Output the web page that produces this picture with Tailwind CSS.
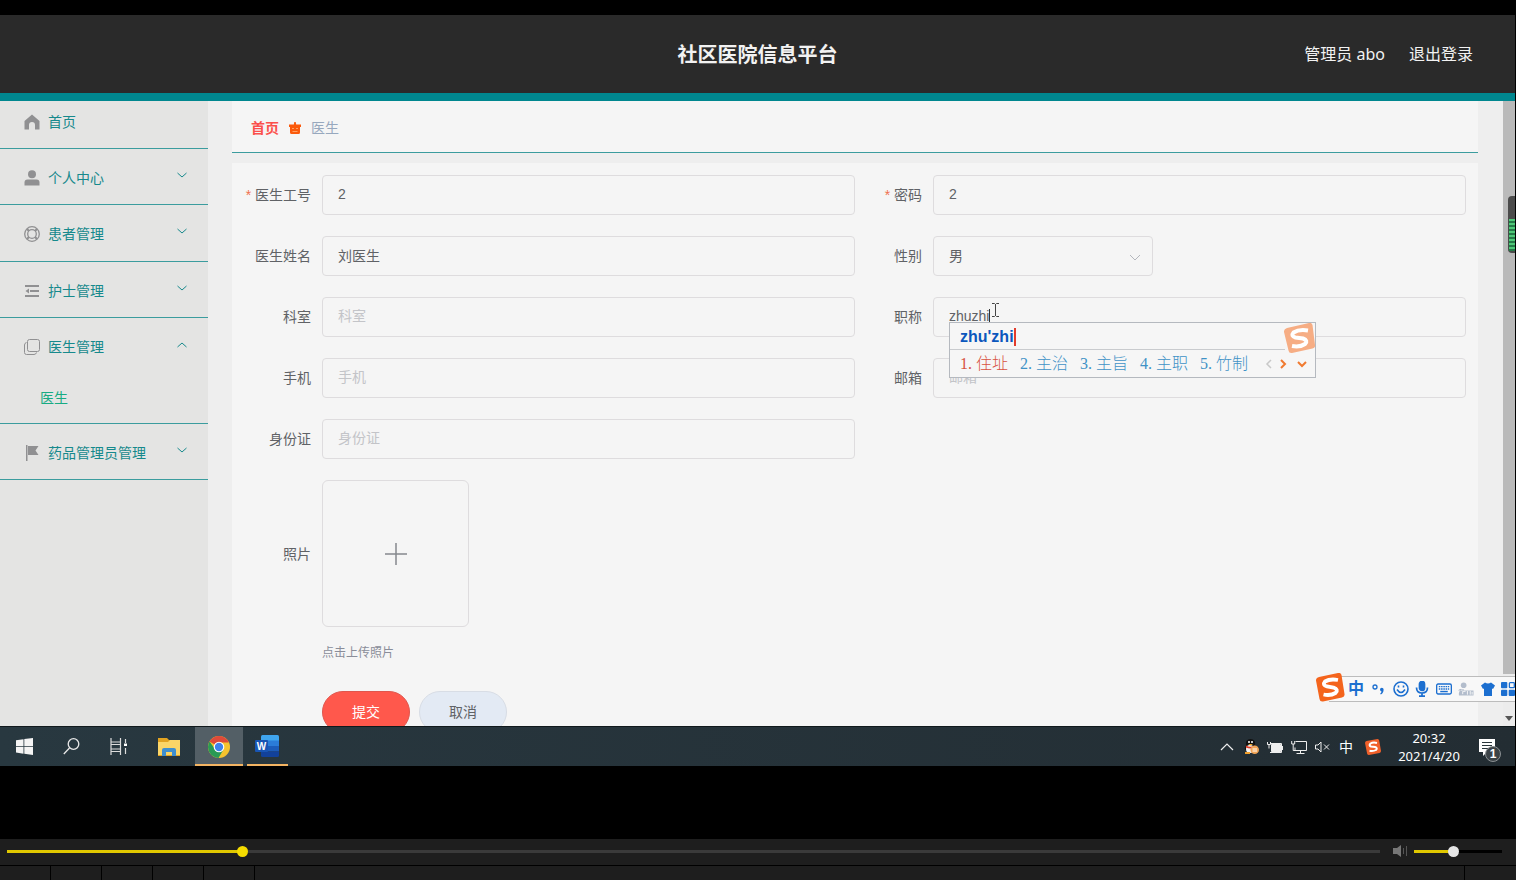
<!DOCTYPE html>
<html lang="zh-CN">
<head>
  <meta charset="UTF-8">
  <meta name="viewport" content="width=device-width, initial-scale=1.0">
  <title>社区医院信息平台</title>
  <script src="https://cdn.jsdelivr.net/npm/@tailwindcss/browser@4"></script>
</head>
<body class="bg-black h-screen flex flex-col overflow-hidden text-sm font-['Liberation_Sans','Noto_Sans_CJK_SC',sans-serif]">

  <!-- Recorded desktop -->
  <div class="flex-1 min-h-0 flex flex-col mt-[15px] mr-px">

    <!-- Header -->
    <header class="h-[86px] shrink-0 grid grid-cols-[1fr_auto_1fr] items-center bg-[#2a2a2a] border-b-8 border-[#00878f] px-[42px] text-[#f2f2f2]">
      <h1 class="col-start-2 pt-px text-xl font-bold">社区医院信息平台</h1>
      <nav class="flex justify-end gap-6 text-base font-['Noto_Sans','Noto_Sans_CJK_SC',sans-serif]">
        <span>管理员 abo</span>
        <a href="#">退出登录</a>
      </nav>
    </header>

    <div class="flex-1 min-h-0 flex bg-[#eeeeee] overflow-hidden relative">

      <!-- Sidebar -->
      <aside class="w-52 shrink-0 bg-[#e4e4e3] text-[#16898c]">
        <ul class="-mt-2">
          <li class="border-b border-[#3b9c9e]">
            <a href="#" class="h-[55px] pt-0.5 flex items-center gap-2 pl-6">
              <svg class="size-4 text-[#909092]" viewBox="0 0 16 16" fill="currentColor"><path d="M8 .5.500 7v8.500H5V11a3 3 0 0 1 6 0v4.500h4.500V7z"/></svg>
              <span>首页</span>
            </a>
          </li>
          <li class="border-b border-[#3b9c9e]">
            <a href="#" class="h-[55px] pt-0.5 flex items-center gap-2 pl-6 pr-5">
              <svg class="size-4 text-[#909092]" viewBox="0 0 16 16" fill="currentColor"><circle cx="8" cy="4.200" r="4"/><path d="M.5 15.500v-3Q.5 9.500 3.500 9.500h9q3 0 3 3v3z"/></svg>
              <span class="flex-1">个人中心</span>
              <svg class="size-3 mb-1.5" viewBox="0 0 12 12" fill="none" stroke="currentColor"><path d="m1.500 4 4.500 4 4.500-4"/></svg>
            </a>
          </li>
          <li class="border-b border-[#3b9c9e]">
            <a href="#" class="h-14 pt-0.5 flex items-center gap-2 pl-6 pr-5">
              <svg class="size-4 text-[#909092]" viewBox="0 0 16 16" fill="none" stroke="currentColor"><circle cx="8" cy="8" r="7.300" stroke-width="1.300"/><circle cx="8" cy="8" r="4.300" stroke-width="1.300"/><path d="m3 3 2 2m6 6 2 2m0-10-2 2m-6 6-2 2" stroke-width="2"/></svg>
              <span class="flex-1">患者管理</span>
              <svg class="size-3 mb-1.5" viewBox="0 0 12 12" fill="none" stroke="currentColor"><path d="m1.500 4 4.500 4 4.500-4"/></svg>
            </a>
          </li>
          <li class="border-b border-[#3b9c9e]">
            <a href="#" class="h-[55px] pt-0.5 flex items-center gap-2 pl-6 pr-5">
              <svg class="size-4 text-[#909092]" viewBox="0 0 16 16" fill="none" stroke="currentColor" stroke-width="2"><path d="M1 3h14M6 8h9M1 13h14"/><path d="M5 5.500v5L1.500 8z" fill="currentColor" stroke="none"/></svg>
              <span class="flex-1">护士管理</span>
              <svg class="size-3 mb-1.5" viewBox="0 0 12 12" fill="none" stroke="currentColor"><path d="m1.500 4 4.500 4 4.500-4"/></svg>
            </a>
          </li>
          <li class="border-b border-[#3b9c9e]">
            <a href="#" class="h-[55px] pt-0.5 flex items-center gap-2 pl-6 pr-5">
              <svg class="size-4 text-[#909092]" viewBox="0 0 16 16" fill="none" stroke="currentColor"><rect x="3.500" y=".5" width="12" height="12" rx="2"/><path d="M2.500 3.500Q.5 4 .5 6v7.500q0 2 2 2H10q2 0 2.500-2"/></svg>
              <span class="flex-1">医生管理</span>
              <svg class="size-3 mb-1" viewBox="0 0 12 12" fill="none" stroke="currentColor"><path d="m1.500 8 4.500-4 4.500 4"/></svg>
            </a>
            <a href="#" class="h-[50px] flex items-center pl-10 text-[#17ab83]">医生</a>
          </li>
          <li class="border-b border-[#3b9c9e]">
            <a href="#" class="h-[55px] pt-0.5 flex items-center gap-2 pl-6 pr-5">
              <svg class="size-4 text-[#909092]" viewBox="0 0 16 16" fill="currentColor"><path d="M2 0h1.500v16H2zM4 1h10.500l-3 4.500 3 4.500H4z"/></svg>
              <span class="flex-1">药品管理员管理</span>
              <svg class="size-3 mb-1.5" viewBox="0 0 12 12" fill="none" stroke="currentColor"><path d="m1.500 4 4.500 4 4.500-4"/></svg>
            </a>
          </li>
        </ul>
      </aside>

      <!-- Content -->
      <main class="flex-1 min-w-0 flex flex-col pl-6 pr-[25px]">
        <nav class="h-[52px] shrink-0 flex items-center gap-[10px] pl-[19px] pt-0.5 bg-[#f5f5f5] border-b border-[#3b9c9e]">
          <a href="#" class="font-bold text-[#fb504c]">首页</a>
          <svg class="size-3" viewBox="0 0 12 12" fill="#fb5a0c"><path d="M5.300 0h1.400l.5 2.500H12V5h-1v5.500Q11 12 9.500 12h-7Q1 12 1 10.500V5H0V2.500h4.800z"/><path d="M3 6.500h2m2 0h2M3.500 9.500h5" stroke="#ffb27a" stroke-width=".8"/></svg>
          <span class="text-[#97a8be]">医生</span>
        </nav>

        <form class="flex-1 min-h-0 mt-[10px] p-3 bg-[#f5f5f5] text-[#606266]">
          <div class="grid grid-cols-2 gap-y-[21px]">
            <div class="flex items-center">
              <label for="account" class="w-[78px] pr-[11px] text-right"><span class="text-[#f0714f]">*</span> 医生工号</label>
              <input id="account" type="text" value="2" class="flex-1 min-w-0 h-10 px-[15px] pb-[2px] border border-[#dedcde] rounded">
            </div>
            <div class="flex items-center">
              <label for="password" class="w-[78px] pr-[11px] text-right"><span class="text-[#f0714f]">*</span> 密码</label>
              <input id="password" type="text" value="2" class="flex-1 min-w-0 h-10 px-[15px] pb-[2px] border border-[#dedcde] rounded">
            </div>
            <div class="flex items-center">
              <label for="name" class="w-[78px] pr-[11px] text-right">医生姓名</label>
              <input id="name" type="text" value="刘医生" class="flex-1 min-w-0 h-10 px-[15px] pb-[2px] border border-[#dedcde] rounded">
            </div>
            <div class="flex items-center">
              <label for="gender" class="w-[78px] pr-[11px] text-right">性别</label>
              <div class="relative w-[220px]">
                <select id="gender" class="w-full h-10 px-[15px] border border-[#dedcde] rounded appearance-none">
                  <option>男</option>
                  <option>女</option>
                </select>
                <svg class="absolute right-[11px] top-[14px] size-[14px] pointer-events-none" viewBox="0 0 14 14" fill="none" stroke="#b4b7bd"><path d="m2 5 5 5 5-5"/></svg>
              </div>
            </div>
            <div class="flex items-center">
              <label for="dept" class="w-[78px] pr-[11px] text-right">科室</label>
              <input id="dept" type="text" placeholder="科室" class="flex-1 min-w-0 h-10 px-[15px] pb-[2px] border border-[#dedcde] rounded placeholder:text-[#c3c4c8]">
            </div>
            <div class="flex items-center">
              <label for="title" class="w-[78px] pr-[11px] text-right">职称</label>
              <div class="relative flex-1">
                <input id="title" type="text" value="zhuzhi" class="w-full h-10 px-[15px] pb-[2px] border border-[#dedcde] rounded">
                <span class="absolute left-[56px] top-3 w-px h-[14px] bg-[#333]"></span>
                <svg class="absolute left-[59px] top-[6px] w-[7px] h-[14px]" viewBox="0 0 7 14" fill="none" stroke="#444"><path d="M0 .5h2.500l1 1 1-1H7M3.500 1v12M0 13.500h2.500l1-1 1 1H7"/></svg>

                <!-- Input method candidates -->
                <div class="absolute z-10 left-4 top-[25px] w-[367px] h-14 bg-[#f6f6f6] border border-[#b5b9bf]">
                  <div class="h-[27px] flex items-center pl-[10px] pt-0.5 mr-[30px] border-b border-[#c9cbce] text-base font-bold text-[#0b57bd]">
                    <span>zhu'zhi</span>
                    <span class="w-0.5 h-[18px] bg-[#e23b2c]"></span>
                  </div>
                  <div class="h-[27px] flex items-center gap-3 pl-[10px] text-base text-[#3f92c6] font-['Liberation_Serif','Noto_Sans_CJK_SC',serif] font-light whitespace-nowrap">
                    <span class="flex text-[#d8513f]"><span class="w-4">1.</span>住址</span>
                    <span class="flex"><span class="w-4">2.</span>主治</span>
                    <span class="flex"><span class="w-4">3.</span>主旨</span>
                    <span class="flex"><span class="w-4">4.</span>主职</span>
                    <span class="flex"><span class="w-4">5.</span>竹制</span>
                    <svg class="w-11 h-3 ml-1" viewBox="0 0 44 12" fill="none" stroke="#f07a30" stroke-width="2"><path d="M7 2 3 6l4 4" stroke="#c8c8c8" stroke-width="1.500"/><path d="m17 2 4 4-4 4M34 4l4 4 4-4"/></svg>
                  </div>
                  <svg class="absolute right-0 top-0 size-[31px]" viewBox="0 0 31 31"><path d="M3 5 25 0q3-.5 3.500 2L31 22q.5 3-2.500 3.500L8 30q-3 .5-3.500-2.500L0 9Q-.3 6 3 5z" fill="#f6ad84"/><path d="M24 7.500Q15 6 9.500 9.500q-3 3.500 2 5l7.500 1q5.500 2 2 5.500-5 3.500-13 2" fill="none" stroke="#fff" stroke-width="4"/></svg>
                </div>
              </div>
            </div>
            <div class="flex items-center">
              <label for="phone" class="w-[78px] pr-[11px] text-right">手机</label>
              <input id="phone" type="text" placeholder="手机" class="flex-1 min-w-0 h-10 px-[15px] pb-[2px] border border-[#dedcde] rounded placeholder:text-[#c3c4c8]">
            </div>
            <div class="flex items-center">
              <label for="email" class="w-[78px] pr-[11px] text-right">邮箱</label>
              <input id="email" type="text" placeholder="邮箱" class="flex-1 min-w-0 h-10 px-[15px] pb-[2px] border border-[#dedcde] rounded placeholder:text-[#c3c4c8]">
            </div>
            <div class="flex items-center">
              <label for="idcard" class="w-[78px] pr-[11px] text-right">身份证</label>
              <input id="idcard" type="text" placeholder="身份证" class="flex-1 min-w-0 h-10 px-[15px] pb-[2px] border border-[#dedcde] rounded placeholder:text-[#c3c4c8]">
            </div>
            <div class="flex items-center col-start-1">
              <label for="photo" class="w-[78px] pr-[11px] text-right">照片</label>
              <label for="photo" class="relative size-[147px] flex items-center justify-center border border-[#dedcde] rounded-md">
                <svg class="size-6" viewBox="0 0 24 24" fill="none" stroke="#85888d" stroke-width="1.500"><path d="M12 1v22M1 12h22"/></svg>
                <input id="photo" type="file" class="sr-only">
              </label>
            </div>
          </div>
          <p class="ml-[78px] mt-4 text-xs leading-5 text-[#8a8d99]">点击上传照片</p>
          <div class="ml-[78px] mt-7 flex gap-[9px]">
            <button type="button" class="w-[88px] h-[42px] rounded-[21px] bg-[#ff584c] border border-[#e0564d] text-white">提交</button>
            <button type="button" class="w-[88px] h-[42px] rounded-[21px] bg-[#e3eaf4] border border-[#d8dde5]">取消</button>
          </div>
        </form>
      </main>

      <!-- Scrollbar -->
      <div class="w-3 shrink-0 flex flex-col items-center bg-[#ececec]">
        <div class="w-full flex-1 bg-[#bababa]"></div>
        <div class="w-full h-[52px] flex items-end justify-center pb-[5px]">
          <svg class="w-2 h-[5px]" viewBox="0 0 8 5" fill="#555"><path d="M0 0h8L4 5z"/></svg>
        </div>
      </div>
      <div class="absolute right-0 top-[95px] w-[7px] h-[57px] rounded-l bg-[#4b4b4b] border-b-2 border-[#4b4b4b] flex items-end pl-px">
        <div class="w-full h-8 bg-[repeating-linear-gradient(to_bottom,#4fc878_0_2px,#257a48_2px_4px)]"></div>
      </div>

      <!-- Input method toolbar -->
      <div class="absolute right-0 bottom-6 w-[186px] h-[26px] flex items-center justify-between pl-[19px] bg-[#f8f8f8] border-y border-[#bcbcbc] text-[#1c6fd0]">
        <svg class="absolute -left-[13px] top-[-4px] size-[29px]" viewBox="0 0 29 29"><path d="M3 4 22 0q3-.5 3.500 2L28.500 21q.5 3-2.500 3.500L7 28.500q-3 .5-3.500-2.500L0 7.500Q-.3 5 3 4z" fill="#f4641c"/><path d="M22 7Q14 5.500 9 8.500q-3 3.500 2 5l6.500 1q5.500 2 2 5.500-5 3-12 1.500" fill="none" stroke="#fff" stroke-width="3.800"/></svg>
        <span class="w-4 text-base leading-6 font-bold">中</span>
        <svg class="size-4" viewBox="0 0 16 16"><circle cx="5" cy="6" r="2" fill="none" stroke="currentColor" stroke-width="1.300"/><path d="M10 8.500a1.800 1.800 0 1 1 3.600 0q0 3.500-2.800 5l-.6-.9q1.200-.9 1.300-2.200-1.500-.4-1.500-1.900z" fill="currentColor"/></svg>
        <svg class="size-4" viewBox="0 0 16 16" fill="none" stroke="currentColor" stroke-width="1.600"><circle cx="8" cy="8" r="7"/><path d="M4 8.500q4 6 8 0M5.500 4.500v2m5-2v2"/></svg>
        <svg class="w-[14px] h-4" viewBox="0 0 14 16" fill="none" stroke="currentColor" stroke-width="1.700"><rect x="4.500" y=".5" width="5" height="9" rx="2.500" fill="currentColor"/><path d="M1.500 6.500Q1.500 12 7 12t5.500-5.500M7 12v3M4 15.200h6"/></svg>
        <svg class="w-4 h-3" viewBox="0 0 17 12" fill="none" stroke="currentColor"><rect x=".7" y=".7" width="15.600" height="10.600" rx="1.500" stroke-width="1.400"/><path d="M3 3.500h11M3 6h11" stroke-width="1.500" stroke-dasharray="1.600 .8"/><path d="M4.500 8.700h8" stroke-width="1.500"/></svg>
        <svg class="w-4 h-4" viewBox="0 0 17 16" fill="#b3bdcc"><circle cx="6" cy="4" r="3"/><path d="M1 15q-1-6 5-7v1.500h10.500V15zM0 9.500h5V8H2z"/><path d="M5 13.500v-3h3M10 10v4m3-4v4m2-3v3" stroke="#f8f8f8" fill="none"/></svg>
        <svg class="w-[14px] h-[14px]" viewBox="0 0 14 14" fill="currentColor"><path d="M4 .5q3 2 6 0l4 3-2 3.500-1-.5V14H3V6.500L2 7 0 3.500z"/></svg>
        <svg class="w-[14px] h-[14px]" viewBox="0 0 14 14" fill="currentColor"><rect width="6.300" height="6.300" rx="1"/><rect y="7.700" width="6.300" height="6.300" rx="1"/><rect x="7.700" y="7.700" width="6.300" height="6.300" rx="1"/><rect x="8.400" y=".7" width="4.900" height="4.900" rx=".7" fill="none" stroke="currentColor" stroke-width="1.300"/></svg>
      </div>
    </div>

    <!-- Taskbar -->
    <footer class="h-10 shrink-0 flex bg-linear-to-r from-[#283840] to-[#232d33] border-t border-[#10191c] text-white">
      <button aria-label="开始" class="w-12 flex items-center justify-center">
        <svg class="size-[17px]" viewBox="0 0 17 17" fill="#f4f4f4"><path d="M0 2.300 7.500 1.200V8H0zM8.300 1.100 17 0v8H8.300zM0 8.800h7.500v6.900L0 14.600zM8.300 8.800H17V17l-8.700-1.200z"/></svg>
      </button>
      <button aria-label="搜索" class="w-[47px] flex items-center justify-center">
        <svg class="size-[17px]" viewBox="0 0 17 17" fill="none" stroke="#e8e8e8" stroke-width="1.300"><circle cx="10.500" cy="6" r="5.300"/><path d="M6.500 10 .8 16"/></svg>
      </button>
      <button aria-label="任务视图" class="w-[47px] flex items-center justify-center">
        <svg class="size-[17px]" viewBox="0 0 17 17" fill="none" stroke="#dcdcdc" stroke-width="1.200"><path d="M1 0v17M10.500 0v17M1 4h9.500M1 6.500h9.500M1 11h9.500M1 13.500h9.500M15.500 1v4m0 5v6"/><path d="M14 5.500h3V8h-3z" fill="#fff" stroke="none"/></svg>
      </button>
      <button aria-label="文件资源管理器" class="w-[53px] flex items-center justify-center">
        <svg class="w-[22px] h-[18px]" viewBox="0 0 22 18"><path d="M0 0h9l2 2h11v16H0z" fill="#e2a321"/><path d="M0 4h10l2-2h10v15H0z" fill="#fbd567"/><path d="M4 18v-6q0-2 2-2h10q2 0 2 2v6h-4v-4H8v4z" fill="#3f8fce"/></svg>
      </button>
      <button aria-label="Chrome" class="w-12 pt-0.5 flex items-center justify-center bg-[#535f66] border-b-2 border-[#f3b463]">
        <svg class="size-[22px]" viewBox="0 0 22 22"><circle cx="11" cy="11" r="11" fill="#f5c32f"/><path d="M11 11 1.500 5.500a11 11 0 0 1 19 0L20.500 6.500H11z" fill="#de4a3a"/><path d="M1.500 5.500a11 11 0 0 0 9 16.500l5-8.500L11 11l-4 2z" fill="#299a55"/><circle cx="11" cy="11" r="5.300" fill="#fff"/><circle cx="11" cy="11" r="4.200" fill="#3f82ec"/></svg>
      </button>
      <button aria-label="Word" class="w-[41px] ml-1 pr-0.5 flex items-center justify-center border-b-2 border-[#f3b463]">
        <svg class="w-6 h-[22px]" viewBox="0 0 24 22"><path d="M6 1.500Q6 0 7.500 0H22.500Q24 0 24 1.500V6H6z" fill="#3fa5ee"/><path d="M6 5.500h18V11H6z" fill="#2b7cd8"/><path d="M6 11h18v5.500H6z" fill="#1c5cba"/><path d="M6 16.500h18v4Q24 22 22.500 22h-15Q6 22 6 20.500z" fill="#12419a"/><rect y="5" width="13" height="12" rx="1" fill="#1855b4"/><text x="6.500" y="14.500" text-anchor="middle" font-family="Liberation Sans" font-weight="bold" font-size="10" fill="#fff">W</text></svg>
      </button>

      <div class="ml-auto flex items-center pr-[11px]">
        <div class="w-6 flex justify-center"><svg class="w-[14px] h-2" viewBox="0 0 14 8" fill="none" stroke="#eee" stroke-width="1.200"><path d="m1 7 6-6 6 6"/></svg></div>
        <div class="w-6 flex justify-center"><svg class="size-[15px]" viewBox="0 0 15 15"><path d="M2 7Q1 0 6.500 0T11 7q2 2 1 4H1Q0 9 2 7z" fill="#111"/><ellipse cx="6" cy="10" rx="4" ry="4" fill="#f3f3f3"/><circle cx="5" cy="3" r="1" fill="#fff"/><circle cx="8" cy="3" r="1" fill="#fff"/><path d="M4 5h5l-2.500 1.500z" fill="#f9b024"/><path d="M2 6.500q4.500 2.500 9 0v2q-4.500 2-9 0z" fill="#e03a25"/><path d="M1 13h5v2H1z" fill="#f2a02b"/><circle cx="10.700" cy="10.700" r="4.300" fill="#f1a456"/><path d="M8.500 10h4.500m-4.500 2h4.500" stroke="#fff"/></svg></div>
        <div class="w-6 flex justify-center"><svg class="w-4 h-3" viewBox="0 0 16 12" fill="none" stroke="#eee"><path d="M4.500 3.500h9v7h-9z" fill="#eee"/><path d="M3 2.500h11.500v9H3M15.500 5v4M.5 1v2.500h3V1M2 3.500v4"/></svg></div>
        <div class="w-6 flex justify-center"><svg class="w-4 h-[14px]" viewBox="0 0 16 14" fill="none" stroke="#eee"><path d="M4.500 1.500h11v9H4v-3M9.500 10.500v3m-4 0h8M.7 1v3h3V1M2.200 4v6.500h3"/></svg></div>
        <div class="w-[23px] flex justify-center"><svg class="w-[15px] h-3" viewBox="0 0 15 12" fill="none" stroke="#eee"><path d="M.5 4H3l3-3v10L3 8H.5zM9 3.500l5 5m0-5-5 5"/></svg></div>
        <div class="w-6 text-center leading-5">中</div>
        <div class="w-[30px] flex justify-center"><svg class="size-4" viewBox="0 0 16 16"><path d="M1.500 2 12.500 0q1.500 0 1.700 1.500L16 12q0 1.500-1.500 1.900L4 16q-1.500 0-1.900-1.500L0 4Q0 2.500 1.500 2z" fill="#f0602a"/><path d="M12 4Q8 3 5.500 4.500q-2 2 .5 3l4 .5q3 1 1 3-2.500 1.500-6.500.8" fill="none" stroke="#fff" stroke-width="2"/></svg></div>
        <div class="w-[82px] text-center text-[13px] leading-[18px] font-['Noto_Sans',sans-serif]">
          <p>20:32</p>
          <p>2021/4/20</p>
        </div>
        <div class="relative w-[34px] h-6 flex justify-center">
          <svg class="w-4 h-[18px] mt-1" viewBox="0 0 16 18"><path d="M0 0h16v13H8l-4 4v-4H0z" fill="#fff"/><path d="M3 3.500h10M3 6.500h10M3 9.500h6" stroke="#2a363c"/></svg>
          <span class="absolute left-[15px] top-[11px] size-4 rounded-full bg-[#3c4347] border border-[#8b9093] text-center text-xs leading-[14px] font-bold">1</span>
        </div>
      </div>
    </footer>
  </div>

  <!-- Video player controls -->
  <div class="shrink-0 mt-[73px]">
    <div class="h-[26px] flex items-center pl-[7px] pr-[14px] pb-0.5 bg-[#1e1e1e]">
      <input type="range" aria-label="播放进度" min="0" max="1000" value="169" class="flex-1 min-w-0 h-[3px] appearance-none bg-[linear-gradient(to_right,#e0c800_17%,#3a3a3a_17%)] [&::-webkit-slider-thumb]:appearance-none [&::-webkit-slider-thumb]:size-[11px] [&::-webkit-slider-thumb]:rounded-full [&::-webkit-slider-thumb]:bg-[#f5dc00]">
      <svg class="w-[14px] h-3 ml-[13px] mr-[7px]" viewBox="0 0 14 12" fill="#777"><path d="M0 3h4l4-3v12L4 9H0z"/><path d="M10 3h1v6h-1zM13 1h1v10h-1z" fill="#555"/></svg>
      <input type="range" aria-label="音量" min="0" max="1000" value="440" class="w-[88px] h-[3px] appearance-none bg-[linear-gradient(to_right,#e0c800_44%,#000_44%)] [&::-webkit-slider-thumb]:appearance-none [&::-webkit-slider-thumb]:size-[11px] [&::-webkit-slider-thumb]:rounded-full [&::-webkit-slider-thumb]:bg-[#e6e6e6]">
    </div>
    <div class="h-[15px] flex bg-[#1e1e1e] border-t border-black">
      <button aria-label="播放" class="w-[51px] border-r border-black"></button>
      <button aria-label="停止" class="w-[51px] border-r border-black"></button>
      <button aria-label="上一个" class="w-[51px] border-r border-black"></button>
      <button aria-label="下一个" class="w-[51px] border-r border-black"></button>
      <button aria-label="打开" class="w-[51px] border-r border-black"></button>
      <button aria-label="全屏" class="w-[52px] ml-auto border-l border-black"></button>
    </div>
  </div>

</body>
</html>
